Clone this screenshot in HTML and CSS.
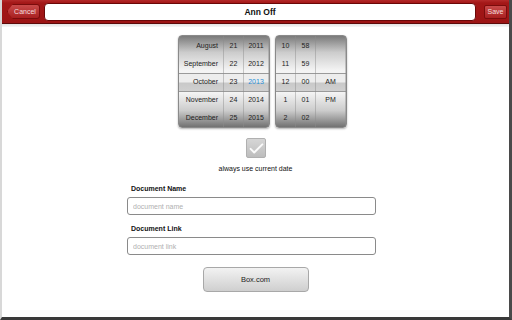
FILE: index.html
```html
<!DOCTYPE html>
<html>
<head>
<meta charset="utf-8">
<link rel="stylesheet" href="styles.css">
</head>
<body>
<div class="frame">
  <header class="topbar">
    <button class="btn-cancel">Cancel</button>
    <div class="title">Ann Off</div>
    <button class="btn-save">Save</button>
  </header>
  <div class="shadow-line"></div>
  <main class="content">
    <div class="picker">
      <div class="wheel wheel-date">
        <div class="col col-month">
          <span>August</span><span>September</span><span>October</span><span>November</span><span>December</span>
        </div>
        <div class="col col-day">
          <span>21</span><span>22</span><span>23</span><span>24</span><span>25</span>
        </div>
        <div class="col col-year">
          <span>2011</span><span>2012</span><span class="sel">2013</span><span>2014</span><span>2015</span>
        </div>
        <div class="band"></div>
      </div>
      <div class="wheel wheel-time">
        <div class="col col-hour">
          <span>10</span><span>11</span><span>12</span><span>1</span><span>2</span>
        </div>
        <div class="col col-min">
          <span>58</span><span>59</span><span>00</span><span>01</span><span>02</span>
        </div>
        <div class="col col-ampm">
          <span></span><span></span><span>AM</span><span>PM</span><span></span>
        </div>
        <div class="band"></div>
      </div>
    </div>
    <div class="check">
      <svg width="20" height="20" viewBox="0 0 20 20">
        <path d="M4 11 L8 15 L17 6" fill="none" stroke="#fafafa" stroke-width="2.2" stroke-linecap="round" stroke-linejoin="round"/>
      </svg>
    </div>
    <div class="check-label">always use current date</div>
    <form class="fields">
      <label class="field-label">Document Name</label>
      <input class="field" type="text" placeholder="document name">
      <label class="field-label">Document Link</label>
      <input class="field" type="text" placeholder="document link">
    </form>
    <button class="btn-box">Box.com</button>
  </main>
</div>
</body>
</html>
```
FILE: styles.css
```css
* { box-sizing: border-box; }
html, body { margin: 0; padding: 0; }
body {
  width: 512px; height: 320px; overflow: hidden;
  font-family: "Liberation Sans", Arial, sans-serif;
  background: #fff;
}
.frame {
  width: 512px; height: 320px;
  border-left: 2px solid #d8d8d8;
  border-right: 3px solid #4a4a4a;
  border-bottom: 3px solid #3a3a3a;
  display: flex; flex-direction: column;
}
.topbar {
  height: 24px;
  background: linear-gradient(#b42a2a 0, #a31717 3px, #9c1414 100%);
  border-bottom: 1px solid #5c0a0a;
  display: flex; align-items: center;
  padding: 0 2px 0 5px;
}
.btn-cancel {
  height: 15px; width: 33px;
  border: 1px solid #7a0c0c;
  background: linear-gradient(#c94a4a, #a82020);
  color: #f3dede;
  font: 7px "Liberation Sans", Arial, sans-serif;
  padding: 0 0 0 3px;
  clip-path: polygon(6px 0, 100% 0, 100% 100%, 6px 100%, 0 50%);
  border-radius: 0 3px 3px 0;
}
.title {
  flex: 1;
  height: 18px;
  margin-left: 4px;
  background: #fff;
  border-radius: 4px;
  border: 1px solid #6a0808;
  display: flex; align-items: center; justify-content: center;
  font-size: 8.5px; font-weight: bold; color: #111;
}
.btn-save {
  height: 14px; width: 23px;
  margin-left: 8px;
  border: 1px solid #7a0c0c;
  border-radius: 2px;
  background: linear-gradient(#c94a4a, #a82020);
  color: #f3dede;
  font: 7px "Liberation Sans", Arial, sans-serif;
  padding: 0;
}
.shadow-line {
  height: 3px;
  background: linear-gradient(#e2e2e2, #f6f6f6);
}
.content {
  flex: 1;
  display: flex; flex-direction: column; align-items: center;
  padding-top: 8px;
}
.picker {
  display: flex; gap: 5px;
  margin-left: 14px;
}
.wheel {
  position: relative;
  display: flex;
  height: 93px;
  border-radius: 4px;
  border: 1px solid #8a8a8a;
  background: linear-gradient(#7a7a7a 0%, #cccccc 18%, #f4f4f4 38%, #f4f4f4 62%, #cccccc 82%, #727272 100%);
  box-shadow: 0 1px 2px rgba(0,0,0,0.3);
  overflow: hidden;
}
.wheel-date { width: 92px; }
.wheel-time { width: 72px; }
.col {
  display: flex; flex-direction: column;
  padding-top: 1px;
  font-size: 7px; color: #222;
  border-right: 1px solid rgba(140,140,140,0.45);
  position: relative; z-index: 1;
}
.col:last-of-type { border-right: none; }
.col span { height: 18px; line-height: 18px; }
.col-month { width: 45px; text-align: right; padding-right: 5px; }
.col-day { width: 20px; text-align: center; }
.col-year { flex: 1; text-align: center; }
.col-hour { width: 20px; text-align: center; }
.col-min { width: 20px; text-align: center; }
.col-ampm { flex: 1; text-align: center; }
.sel { color: #2a8fd8; }
.band {
  position: absolute; left: 0; right: 0; top: 37px; height: 19px;
  border-top: 1px solid #9a9a9a;
  border-bottom: 1px solid #9a9a9a;
  background: linear-gradient(#ededed 0, #ededed 45%, #c9c9c9 55%, #d0d0d0 100%);
  z-index: 0;
}
.check {
  margin-top: 10px;
  width: 20px; height: 20px;
  border-radius: 2px;
  background: linear-gradient(#d6d6d6, #bdbdbd);
  border: 1px solid #b0b0b0;
  display: flex; align-items: center; justify-content: center;
}
.check svg { display: block; }
.check-label {
  margin-top: 7px;
  font-size: 7px; color: #111;
}
.fields {
  margin: 13px 8px 0 0;
  width: 249px;
  display: flex; flex-direction: column;
}
.field-label {
  font-size: 7px; font-weight: bold; color: #111;
  padding-left: 4px;
  margin-bottom: 5px;
}
.field {
  height: 18px;
  border: 1px solid #8a8a8a;
  border-radius: 3px;
  padding: 0 5px;
  font: 7px "Liberation Sans", Arial, sans-serif;
  margin-bottom: 10px;
  outline: none;
}
.field::placeholder { color: #b0b0b0; }
.btn-box {
  margin-top: 2px;
  width: 106px; height: 25px;
  border: 1px solid #a8a8a8;
  border-radius: 4px;
  background: linear-gradient(#f2f2f2, #cfcfcf);
  font: 7.5px "Liberation Sans", Arial, sans-serif;
  color: #222;
}
```
